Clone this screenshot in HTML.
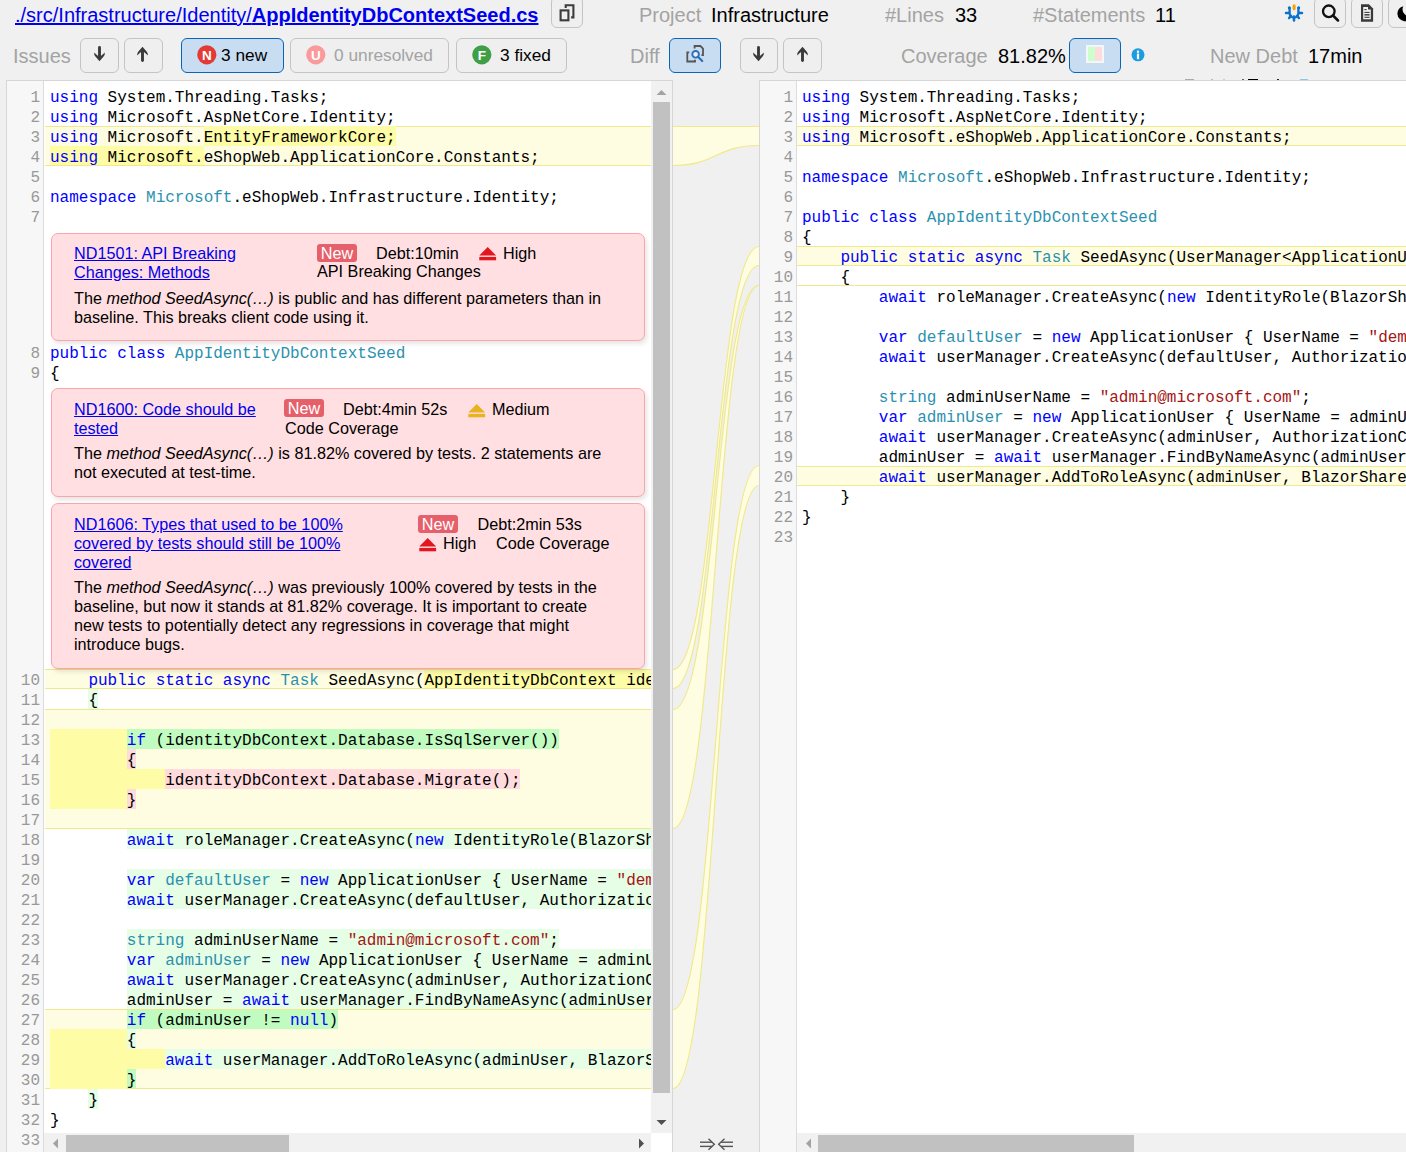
<!DOCTYPE html>
<html><head><meta charset="utf-8">
<style>
*{box-sizing:border-box;margin:0;padding:0}
html,body{width:1406px;height:1152px;overflow:hidden;background:#f0f0f0;font-family:"Liberation Sans",sans-serif;}
body{position:relative}
.a{position:absolute;white-space:nowrap}
.hd{font-size:20px;line-height:24px}
.bt{font-size:17.3px;line-height:22px}
.lbl{color:#a3a3a3}
.val{color:#000}
.btn{position:absolute;border:1px solid #c4c4c4;border-radius:6px;background:#efefef}
.btn.on{background:#c8dcf2;border:1.5px solid #0a64b8}
.pane{position:absolute;top:80px;height:1090px;background:#fff;border:1px solid #d6d6d6;overflow:hidden}
.gut{position:absolute;left:0;top:0;width:37px;height:100%;background:#f7f7f7;border-right:1px solid #dcdcdc}
.code{position:absolute;overflow:hidden}
.r{position:absolute}
.ln{position:absolute;left:6px;height:20px;padding-top:2px;line-height:20px;font-family:"Liberation Mono",monospace;font-size:16px;white-space:pre;color:#000}
.nm{position:absolute;right:3px;height:20px;padding-top:2px;line-height:20px;font-family:"Liberation Mono",monospace;font-size:16px;color:#999;text-align:right}
i{font-style:normal}
i.k{color:#0000ff}
i.t{color:#2b91af}
i.s{color:#a31515}
.box{position:absolute;left:51px;width:594px;background:#ffdfe1;border:1px solid #fca5a8;border-radius:7px;box-shadow:2px 3px 4px rgba(0,0,0,0.10)}
.bx{position:absolute;white-space:nowrap;font-size:16.2px;line-height:19px;color:#000}
.bx a{color:#0000ee;text-decoration:underline}
.bx em{font-style:italic}
.badge{position:absolute;height:18px;width:40px;background:#e6606c;color:#fff;border-radius:3px;font-size:16.2px;line-height:19.5px;text-align:center}
.sb{position:absolute;background:#f1f1f1}
.th{position:absolute;background:#c1c1c1}
svg{position:absolute;overflow:visible}
</style></head><body>

<!-- header row 1 -->
<div class="a hd" style="left:15px;top:3px;"><a style="color:#0000ee;text-decoration:underline">./src/Infrastructure/Identity/<b>AppIdentityDbContextSeed.cs</b></a></div>
<div class="btn" style="left:551px;top:-4px;width:32px;height:32px"></div>
<svg style="left:559px;top:4px" width="18" height="18" viewBox="0 0 18 18"><path d="M6.7 3.9 V1.2 H14.4 V13.4 H12.1" fill="none" stroke="#3c3c3c" stroke-width="2.1"/><rect x="1.6" y="6.4" width="7.8" height="9.9" fill="none" stroke="#3c3c3c" stroke-width="2.1"/></svg>
<div class="a hd lbl" style="left:639px;top:3px">Project</div>
<div class="a hd val" style="left:711px;top:3px">Infrastructure</div>
<div class="a hd lbl" style="left:885px;top:3px">#Lines</div>
<div class="a hd val" style="left:955px;top:3px">33</div>
<div class="a hd lbl" style="left:1033px;top:3px">#Statements</div>
<div class="a hd val" style="left:1155px;top:3px">11</div>
<!-- gear -->
<svg style="left:1284px;top:3px" width="20" height="20" viewBox="0 0 20 20">
 <g fill="none" stroke="#0a72c8" stroke-linecap="round">
  <path d="M5.6 5 V10.2 A4.4 4.4 0 0 0 14.4 10.2 V5" stroke-width="2.3"/>
  <line x1="5" y1="9.9" x2="2" y2="9.9" stroke-width="2.5"/>
  <line x1="15" y1="9.9" x2="18" y2="9.9" stroke-width="2.5"/>
  <line x1="7" y1="12.8" x2="5.1" y2="15" stroke-width="2.5"/>
  <line x1="13" y1="12.8" x2="14.9" y2="15" stroke-width="2.5"/>
  <line x1="10" y1="13.5" x2="10" y2="17.6" stroke-width="2.5"/>
 </g>
 <circle cx="5.3" cy="4.8" r="1.5" fill="#0a72c8"/>
 <circle cx="14.7" cy="4.8" r="1.5" fill="#0a72c8"/>
 <rect x="8.6" y="1.3" width="3" height="6" rx="1.5" fill="#f9a000"/>
</svg>
<div class="btn" style="left:1314px;top:-3px;width:32px;height:31px"></div>
<svg style="left:1320px;top:3px" width="20" height="20" viewBox="0 0 20 20"><circle cx="8.8" cy="8.3" r="5.8" fill="none" stroke="#111" stroke-width="2.3"/><line x1="13" y1="12.5" x2="18" y2="17.5" stroke="#111" stroke-width="2.5" stroke-linecap="round"/></svg>
<div class="btn" style="left:1351px;top:-3px;width:32px;height:31px"></div>
<svg style="left:1360px;top:4px" width="14" height="18" viewBox="0 0 14 18"><path d="M1 0.3 H8.9 L13.1 4.5 V17.8 H1 Z" fill="#3a3a3a"/><path d="M3.2 2.9 H8 V5.6 H10.8 V15.2 H3.2 Z" fill="#f2f2f2"/><g stroke="#3a3a3a" stroke-width="1.1"><line x1="4.4" y1="5.6" x2="6.6" y2="5.6"/><line x1="4.4" y1="8.4" x2="9.6" y2="8.4"/><line x1="4.4" y1="10.8" x2="9.6" y2="10.8" stroke-width="1.5"/><line x1="4.4" y1="13.3" x2="9.6" y2="13.3"/></g></svg>
<div class="btn" style="left:1388px;top:-3px;width:32px;height:31px"></div>
<svg style="left:1394px;top:3px" width="22" height="22" viewBox="0 0 22 22"><path d="M9.275 3.198 A7.6 7.6 0 1 0 18.319 12.652 A7 7 0 0 1 9.275 3.198 Z" fill="#000"/></svg>

<!-- header row 2 -->
<div class="a hd lbl" style="left:13px;top:44px">Issues</div>
<div class="btn" style="left:80px;top:38px;width:39px;height:35px"></div>
<svg style="left:93px;top:46px" width="13" height="16" viewBox="0 0 13 16"><line x1="6.5" y1="1.4" x2="6.5" y2="12" stroke="#3a3a3a" stroke-width="2.9" stroke-linecap="round"/><path d="M1.2 6.6 Q1 9.2 2.2 10.2 L6.5 15.2 L10.8 10.2 Q12 9.2 11.8 6.6 Q9.5 9 6.5 11 Q3.5 9 1.2 6.6 Z" fill="#3a3a3a"/></svg>
<div class="btn" style="left:124px;top:38px;width:39px;height:35px"></div>
<svg style="left:136px;top:46px" width="13" height="16" viewBox="0 0 13 16"><line x1="6.5" y1="4" x2="6.5" y2="14.6" stroke="#3a3a3a" stroke-width="2.9" stroke-linecap="round"/><path d="M1.2 9.4 Q1 6.8 2.2 5.8 L6.5 0.8 L10.8 5.8 Q12 6.8 11.8 9.4 Q9.5 7 6.5 5 Q3.5 7 1.2 9.4 Z" fill="#3a3a3a"/></svg>
<div class="btn on" style="left:181px;top:38px;width:103px;height:35px"></div>
<svg style="left:197px;top:45px" width="20" height="20" viewBox="0 0 20 20"><circle cx="9.8" cy="9.8" r="9.6" fill="#e33a36"/><text x="9.8" y="14.6" text-anchor="middle" font-family="Liberation Sans" font-weight="bold" font-size="13.5" fill="#fff">N</text></svg>
<div class="a bt val" style="left:221px;top:44px">3 new</div>
<div class="btn" style="left:290px;top:38px;width:159px;height:35px"></div>
<svg style="left:306px;top:45px" width="20" height="20" viewBox="0 0 20 20"><circle cx="9.8" cy="9.8" r="9.6" fill="#fa9a9a"/><text x="9.8" y="14.6" text-anchor="middle" font-family="Liberation Sans" font-weight="bold" font-size="13.5" fill="#fff">U</text></svg>
<div class="a bt lbl" style="left:334px;top:44px">0 unresolved</div>
<div class="btn" style="left:456px;top:38px;width:111px;height:35px"></div>
<svg style="left:472px;top:45px" width="20" height="20" viewBox="0 0 20 20"><circle cx="9.8" cy="9.8" r="9.6" fill="#3f9f47"/><text x="9.8" y="14.6" text-anchor="middle" font-family="Liberation Sans" font-weight="bold" font-size="13.5" fill="#fff">F</text></svg>
<div class="a bt val" style="left:500px;top:44px">3 fixed</div>
<div class="a hd lbl" style="left:630px;top:44px">Diff</div>
<div class="btn on" style="left:669px;top:38px;width:52px;height:35px"></div>
<svg style="left:685px;top:44px" width="20" height="20" viewBox="0 0 20 20">
 <path d="M9.6 4.4 V2 H15.4 L18 4.6 V11.2 H16.4" fill="none" stroke="#555" stroke-width="1.8"/>
 <path d="M4.2 8.3 H2.3 V17.5 H10 V15.8" fill="none" stroke="#555" stroke-width="1.8"/>
 <circle cx="10.6" cy="10.3" r="3.3" fill="#eef" stroke="#2f6fb5" stroke-width="1.9"/>
 <line x1="13" y1="12.8" x2="17.2" y2="17" stroke="#2f6fb5" stroke-width="2.2" stroke-linecap="round"/>
</svg>
<div class="btn" style="left:740px;top:38px;width:38px;height:35px"></div>
<svg style="left:752px;top:46px" width="13" height="16" viewBox="0 0 13 16"><line x1="6.5" y1="1.4" x2="6.5" y2="12" stroke="#3a3a3a" stroke-width="2.9" stroke-linecap="round"/><path d="M1.2 6.6 Q1 9.2 2.2 10.2 L6.5 15.2 L10.8 10.2 Q12 9.2 11.8 6.6 Q9.5 9 6.5 11 Q3.5 9 1.2 6.6 Z" fill="#3a3a3a"/></svg>
<div class="btn" style="left:783px;top:38px;width:39px;height:35px"></div>
<svg style="left:796px;top:46px" width="13" height="16" viewBox="0 0 13 16"><line x1="6.5" y1="4" x2="6.5" y2="14.6" stroke="#3a3a3a" stroke-width="2.9" stroke-linecap="round"/><path d="M1.2 9.4 Q1 6.8 2.2 5.8 L6.5 0.8 L10.8 5.8 Q12 6.8 11.8 9.4 Q9.5 7 6.5 5 Q3.5 7 1.2 9.4 Z" fill="#3a3a3a"/></svg>
<div class="a hd lbl" style="left:901px;top:44px">Coverage</div>
<div class="a hd val" style="left:998px;top:44px">81.82%</div>
<div class="btn on" style="left:1069px;top:38px;width:52px;height:35px"></div>
<div class="r" style="left:1086px;top:45px;width:17.5px;height:17.5px;background:#f3f7fb"></div>
<div class="r" style="left:1087.5px;top:46.5px;width:7.4px;height:14.5px;background:#ccffcc"></div>
<div class="r" style="left:1094.9px;top:46.5px;width:7.4px;height:14.5px;background:#ffdcdc"></div>
<svg style="left:1131px;top:48px" width="14" height="14" viewBox="0 0 14 14"><circle cx="7" cy="6.8" r="6.5" fill="#1b9be0"/><rect x="5.9" y="2.6" width="2.2" height="2.2" fill="#fff"/><rect x="5.9" y="5.6" width="2.2" height="5.6" fill="#fff"/></svg>
<div class="a hd lbl" style="left:1210px;top:44px">New Debt</div>
<div class="a hd val" style="left:1308px;top:44px">17min</div>

<!-- row3 fragments -->
<div class="r" style="left:1185px;top:79px;width:9px;height:1px;background:#aaa"></div>
<div class="r" style="left:1211px;top:79px;width:2px;height:1px;background:#c8b8a8"></div>
<div class="r" style="left:1223px;top:79px;width:2px;height:1px;background:#ccc"></div>
<div class="r" style="left:1242px;top:79px;width:2px;height:1px;background:#664"></div>
<div class="r" style="left:1248px;top:79px;width:10px;height:1px;background:#000"></div>
<div class="r" style="left:1277px;top:79px;width:2px;height:1px;background:#224"></div>
<div class="r" style="left:1300px;top:79px;width:8px;height:1px;background:#8ec6ec"></div>
<!-- left pane -->
<div class="pane" style="left:6px;width:667px">
  <div class="gut"></div>
</div>
<div class="a" style="left:7px;top:0;width:36px;height:1152px"><div class="nm" style="top:86px">1</div>
<div class="nm" style="top:106px">2</div>
<div class="nm" style="top:126px">3</div>
<div class="nm" style="top:146px">4</div>
<div class="nm" style="top:166px">5</div>
<div class="nm" style="top:186px">6</div>
<div class="nm" style="top:206px">7</div>
<div class="nm" style="top:342px">8</div>
<div class="nm" style="top:362px">9</div>
<div class="nm" style="top:669px">10</div>
<div class="nm" style="top:689px">11</div>
<div class="nm" style="top:709px">12</div>
<div class="nm" style="top:729px">13</div>
<div class="nm" style="top:749px">14</div>
<div class="nm" style="top:769px">15</div>
<div class="nm" style="top:789px">16</div>
<div class="nm" style="top:809px">17</div>
<div class="nm" style="top:829px">18</div>
<div class="nm" style="top:849px">19</div>
<div class="nm" style="top:869px">20</div>
<div class="nm" style="top:889px">21</div>
<div class="nm" style="top:909px">22</div>
<div class="nm" style="top:929px">23</div>
<div class="nm" style="top:949px">24</div>
<div class="nm" style="top:969px">25</div>
<div class="nm" style="top:989px">26</div>
<div class="nm" style="top:1009px">27</div>
<div class="nm" style="top:1029px">28</div>
<div class="nm" style="top:1049px">29</div>
<div class="nm" style="top:1069px">30</div>
<div class="nm" style="top:1089px">31</div>
<div class="nm" style="top:1109px">32</div>
<div class="nm" style="top:1129px">33</div></div>
<div class="code" style="left:44px;width:607px;height:1133px;top:0">
<div class="r" style="left:1.0px;top:126px;width:607.0px;height:40px;background:#fffde1"></div>
<div class="r" style="left:1.0px;top:126px;width:607.0px;height:1px;background:#efe98c"></div>
<div class="r" style="left:1.0px;top:165px;width:607.0px;height:1px;background:#efe98c"></div>
<div class="r" style="left:159.6px;top:126px;width:192.0px;height:20px;background:#fffca6"></div>
<div class="r" style="left:6.0px;top:146px;width:153.6px;height:19px;background:#fffca6"></div>
<div class="r" style="left:1.0px;top:669px;width:607.0px;height:20px;background:#fffde1"></div>
<div class="r" style="left:1.0px;top:669px;width:607.0px;height:1px;background:#efe98c"></div>
<div class="r" style="left:1.0px;top:688px;width:607.0px;height:1px;background:#efe98c"></div>
<div class="r" style="left:380.4px;top:670px;width:288.0px;height:18px;background:#fffca6"></div>
<div class="r" style="left:44.4px;top:689px;width:9.6px;height:20px;background:#e6fde6"></div>
<div class="r" style="left:1.0px;top:709px;width:607.0px;height:120px;background:#fffde1"></div>
<div class="r" style="left:1.0px;top:709px;width:607.0px;height:1px;background:#efe98c"></div>
<div class="r" style="left:1.0px;top:828px;width:607.0px;height:1px;background:#efe98c"></div>
<div class="r" style="left:6.0px;top:729px;width:76.8px;height:20px;background:#fffca6"></div>
<div class="r" style="left:6.0px;top:749px;width:76.8px;height:20px;background:#fffca6"></div>
<div class="r" style="left:6.0px;top:789px;width:76.8px;height:20px;background:#fffca6"></div>
<div class="r" style="left:6.0px;top:769px;width:115.2px;height:20px;background:#fffca6"></div>
<div class="r" style="left:82.8px;top:729px;width:432.0px;height:20px;background:#c0fbc0"></div>
<div class="r" style="left:82.8px;top:749px;width:9.6px;height:20px;background:#ffdbdd"></div>
<div class="r" style="left:121.2px;top:769px;width:355.2px;height:20px;background:#ffdbdd"></div>
<div class="r" style="left:82.8px;top:789px;width:9.6px;height:20px;background:#ffdbdd"></div>
<div class="r" style="left:82.8px;top:829px;width:672.0px;height:20px;background:#e6fde6"></div>
<div class="r" style="left:82.8px;top:869px;width:672.0px;height:20px;background:#e6fde6"></div>
<div class="r" style="left:82.8px;top:889px;width:672.0px;height:20px;background:#e6fde6"></div>
<div class="r" style="left:82.8px;top:949px;width:672.0px;height:20px;background:#e6fde6"></div>
<div class="r" style="left:82.8px;top:969px;width:672.0px;height:20px;background:#e6fde6"></div>
<div class="r" style="left:82.8px;top:989px;width:672.0px;height:20px;background:#e6fde6"></div>
<div class="r" style="left:82.8px;top:929px;width:432.0px;height:20px;background:#e6fde6"></div>
<div class="r" style="left:1.0px;top:1009px;width:607.0px;height:80px;background:#fffde1"></div>
<div class="r" style="left:1.0px;top:1009px;width:607.0px;height:1px;background:#efe98c"></div>
<div class="r" style="left:1.0px;top:1088px;width:607.0px;height:1px;background:#efe98c"></div>
<div class="r" style="left:82.8px;top:1010px;width:211.2px;height:19px;background:#c0fbc0"></div>
<div class="r" style="left:6.0px;top:1029px;width:76.8px;height:20px;background:#fffca6"></div>
<div class="r" style="left:6.0px;top:1069px;width:76.8px;height:20px;background:#fffca6"></div>
<div class="r" style="left:6.0px;top:1049px;width:115.2px;height:20px;background:#fffca6"></div>
<div class="r" style="left:82.8px;top:1029px;width:9.6px;height:20px;background:#e6fde6"></div>
<div class="r" style="left:121.2px;top:1049px;width:672.0px;height:20px;background:#e6fde6"></div>
<div class="r" style="left:82.8px;top:1069px;width:9.6px;height:19px;background:#c0fbc0"></div>
<div class="r" style="left:44.4px;top:1089px;width:9.6px;height:20px;background:#e6fde6"></div>
<div class="ln" style="top:86px;left:6px"><i class="k">using</i> System.Threading.Tasks;</div>
<div class="ln" style="top:106px;left:6px"><i class="k">using</i> Microsoft.AspNetCore.Identity;</div>
<div class="ln" style="top:126px;left:6px"><i class="k">using</i> Microsoft.EntityFrameworkCore;</div>
<div class="ln" style="top:146px;left:6px"><i class="k">using</i> Microsoft.eShopWeb.ApplicationCore.Constants;</div>
<div class="ln" style="top:186px;left:6px"><i class="k">namespace</i> <i class="t">Microsoft</i>.eShopWeb.Infrastructure.Identity;</div>
<div class="ln" style="top:342px;left:6px"><i class="k">public</i> <i class="k">class</i> <i class="t">AppIdentityDbContextSeed</i></div>
<div class="ln" style="top:362px;left:6px">{</div>
<div class="ln" style="top:669px;left:6px">    <i class="k">public</i> <i class="k">static</i> <i class="k">async</i> <i class="t">Task</i> SeedAsync(AppIdentityDbContext identityDbContext, UserManager&lt;ApplicationUser&gt; userManager, RoleManager&lt;IdentityRole&gt; roleManager)</div>
<div class="ln" style="top:689px;left:6px">    {</div>
<div class="ln" style="top:729px;left:6px">        <i class="k">if</i> (identityDbContext.Database.IsSqlServer())</div>
<div class="ln" style="top:749px;left:6px">        {</div>
<div class="ln" style="top:769px;left:6px">            identityDbContext.Database.Migrate();</div>
<div class="ln" style="top:789px;left:6px">        }</div>
<div class="ln" style="top:829px;left:6px">        <i class="k">await</i> roleManager.CreateAsync(<i class="k">new</i> IdentityRole(BlazorShared.Authorization.Constants.Roles.ADMINISTRATORS));</div>
<div class="ln" style="top:869px;left:6px">        <i class="k">var</i> <i class="t">defaultUser</i> = <i class="k">new</i> ApplicationUser { UserName = <i class="s">&quot;demouser@microsoft.com&quot;</i>, Email = <i class="s">&quot;demouser@microsoft.com&quot;</i> };</div>
<div class="ln" style="top:889px;left:6px">        <i class="k">await</i> userManager.CreateAsync(defaultUser, AuthorizationConstants.DEFAULT_PASSWORD);</div>
<div class="ln" style="top:929px;left:6px">        <i class="t">string</i> adminUserName = <i class="s">&quot;admin@microsoft.com&quot;</i>;</div>
<div class="ln" style="top:949px;left:6px">        <i class="k">var</i> <i class="t">adminUser</i> = <i class="k">new</i> ApplicationUser { UserName = adminUserName, Email = adminUserName };</div>
<div class="ln" style="top:969px;left:6px">        <i class="k">await</i> userManager.CreateAsync(adminUser, AuthorizationConstants.DEFAULT_PASSWORD);</div>
<div class="ln" style="top:989px;left:6px">        adminUser = <i class="k">await</i> userManager.FindByNameAsync(adminUserName);</div>
<div class="ln" style="top:1009px;left:6px">        <i class="k">if</i> (adminUser != <i class="k">null</i>)</div>
<div class="ln" style="top:1029px;left:6px">        {</div>
<div class="ln" style="top:1049px;left:6px">            <i class="k">await</i> userManager.AddToRoleAsync(adminUser, BlazorShared.Authorization.Constants.Roles.ADMINISTRATORS);</div>
<div class="ln" style="top:1069px;left:6px">        }</div>
<div class="ln" style="top:1089px;left:6px">    }</div>
<div class="ln" style="top:1109px;left:6px">}</div>

</div>
<!-- left v scrollbar -->
<div class="sb" style="left:651px;top:81px;width:21px;height:1052px"></div>
<div class="th" style="left:653px;top:102px;width:17px;height:991px"></div>
<svg style="left:656px;top:89px" width="11" height="7" viewBox="0 0 11 7"><path d="M0.5 6 L5.5 1 L10.5 6 Z" fill="#a3a3a3"/></svg>
<svg style="left:656px;top:1119px" width="11" height="7" viewBox="0 0 11 7"><path d="M0.5 1 L5.5 6 L10.5 1 Z" fill="#505050"/></svg>
<!-- left h scrollbar -->
<div class="sb" style="left:44px;top:1133px;width:607px;height:21px"></div>
<div class="th" style="left:66px;top:1135px;width:223px;height:17px"></div>
<svg style="left:52px;top:1138px" width="7" height="11" viewBox="0 0 7 11"><path d="M6 0.5 L1 5.5 L6 10.5 Z" fill="#a3a3a3"/></svg>
<svg style="left:638px;top:1138px" width="7" height="11" viewBox="0 0 7 11"><path d="M1 0.5 L6 5.5 L1 10.5 Z" fill="#505050"/></svg>
<div class="r" style="left:652px;top:1134px;width:20px;height:20px;background:#fff"></div>

<!-- middle curves -->
<svg style="left:0;top:0" width="1406" height="1152" viewBox="0 0 1406 1152"><path d="M673 126.5 C716.0 126.5 716.0 126.5 759 126.5 L759 145.5 C716.0 145.5 716.0 165.5 673 165.5 Z" fill="#fffde1"/><path d="M673 126.5 C716.0 126.5 716.0 126.5 759 126.5" fill="none" stroke="#efe98c" stroke-width="1.2"/><path d="M673 165.5 C716.0 165.5 716.0 145.5 759 145.5" fill="none" stroke="#efe98c" stroke-width="1.2"/><path d="M673 669.5 C716.0 669.5 716.0 246.5 759 246.5 L759 265.5 C716.0 265.5 716.0 688.5 673 688.5 Z" fill="#fffde1"/><path d="M673 669.5 C716.0 669.5 716.0 246.5 759 246.5" fill="none" stroke="#efe98c" stroke-width="1.2"/><path d="M673 688.5 C716.0 688.5 716.0 265.5 759 265.5" fill="none" stroke="#efe98c" stroke-width="1.2"/><path d="M673 709.5 C716.0 709.5 716.0 285.5 759 285.5 L759 285.5 C716.0 285.5 716.0 828.5 673 828.5 Z" fill="#fffde1"/><path d="M673 709.5 C716.0 709.5 716.0 285.5 759 285.5" fill="none" stroke="#efe98c" stroke-width="1.2"/><path d="M673 828.5 C716.0 828.5 716.0 285.5 759 285.5" fill="none" stroke="#efe98c" stroke-width="1.2"/><path d="M673 1009.5 C716.0 1009.5 716.0 465.5 759 465.5 L759 485.5 C716.0 485.5 716.0 1088.5 673 1088.5 Z" fill="#fffde1"/><path d="M673 1009.5 C716.0 1009.5 716.0 465.5 759 465.5" fill="none" stroke="#efe98c" stroke-width="1.2"/><path d="M673 1088.5 C716.0 1088.5 716.0 485.5 759 485.5" fill="none" stroke="#efe98c" stroke-width="1.2"/></svg>
<div class="box" style="top:233px;height:108px"></div>
<div class="bx" style="left:74.0px;top:244.0px"><a>ND1501: API Breaking</a></div>
<div class="bx" style="left:74.0px;top:263.0px"><a>Changes: Methods</a></div>
<div class="badge" style="left:317.0px;top:244.0px">New</div>
<div class="bx" style="left:376.0px;top:244.0px">Debt:10min</div>
<svg style="left:479.0px;top:247.0px" width="18" height="14" viewBox="0 0 18 14"><path d="M0.3 8.4 L8.7 0 L17.1 8.4 Z" fill="#e2161e"/><rect x="0.3" y="9.9" width="16.8" height="3.4" fill="#e2161e"/></svg>
<div class="bx" style="left:503.0px;top:244.0px">High</div>
<div class="bx" style="left:317.0px;top:262.0px">API Breaking Changes</div>
<div class="bx" style="left:74.0px;top:289.0px">The <em>method SeedAsync(…)</em> is public and has different parameters than in</div>
<div class="bx" style="left:74.0px;top:308.0px">baseline. This breaks client code using it.</div>
<div class="box" style="top:388px;height:109px"></div>
<div class="bx" style="left:74.0px;top:400.0px"><a>ND1600: Code should be</a></div>
<div class="bx" style="left:74.0px;top:419.0px"><a>tested</a></div>
<div class="badge" style="left:284.0px;top:399.0px">New</div>
<div class="bx" style="left:343.0px;top:400.0px">Debt:4min 52s</div>
<svg style="left:467.5px;top:403.5px" width="18" height="14" viewBox="0 0 18 14"><path d="M0.3 8.4 L8.7 0 L17.1 8.4 Z" fill="#e9b21f"/><rect x="0.3" y="9.9" width="16.8" height="3.4" fill="#e9b21f"/></svg>
<div class="bx" style="left:492.0px;top:400.0px">Medium</div>
<div class="bx" style="left:285.0px;top:418.5px">Code Coverage</div>
<div class="bx" style="left:74.0px;top:444.0px">The <em>method SeedAsync(…)</em> is 81.82% covered by tests. 2 statements are</div>
<div class="bx" style="left:74.0px;top:463.0px">not executed at test-time.</div>
<div class="box" style="top:503px;height:166px"></div>
<div class="bx" style="left:74.0px;top:515.0px"><a>ND1606: Types that used to be 100%</a></div>
<div class="bx" style="left:74.0px;top:534.0px"><a>covered by tests should still be 100%</a></div>
<div class="bx" style="left:74.0px;top:553.0px"><a>covered</a></div>
<div class="badge" style="left:418.0px;top:515.0px">New</div>
<div class="bx" style="left:477.5px;top:514.5px">Debt:2min 53s</div>
<svg style="left:419.0px;top:537.5px" width="18" height="14" viewBox="0 0 18 14"><path d="M0.3 8.4 L8.7 0 L17.1 8.4 Z" fill="#e2161e"/><rect x="0.3" y="9.9" width="16.8" height="3.4" fill="#e2161e"/></svg>
<div class="bx" style="left:443.0px;top:533.5px">High</div>
<div class="bx" style="left:496.0px;top:533.5px">Code Coverage</div>
<div class="bx" style="left:74.0px;top:578.0px">The <em>method SeedAsync(…)</em> was previously 100% covered by tests in the</div>
<div class="bx" style="left:74.0px;top:597.0px">baseline, but now it stands at 81.82% coverage. It is important to create</div>
<div class="bx" style="left:74.0px;top:616.0px">new tests to potentially detect any regressions in coverage that might</div>
<div class="bx" style="left:74.0px;top:635.0px">introduce bugs.</div>

<!-- right pane -->
<div class="pane" style="left:759px;width:660px">
  <div class="gut"></div>
</div>
<div class="a" style="left:760px;top:0;width:36px;height:1152px"><div class="nm" style="top:86px">1</div>
<div class="nm" style="top:106px">2</div>
<div class="nm" style="top:126px">3</div>
<div class="nm" style="top:146px">4</div>
<div class="nm" style="top:166px">5</div>
<div class="nm" style="top:186px">6</div>
<div class="nm" style="top:206px">7</div>
<div class="nm" style="top:226px">8</div>
<div class="nm" style="top:246px">9</div>
<div class="nm" style="top:266px">10</div>
<div class="nm" style="top:286px">11</div>
<div class="nm" style="top:306px">12</div>
<div class="nm" style="top:326px">13</div>
<div class="nm" style="top:346px">14</div>
<div class="nm" style="top:366px">15</div>
<div class="nm" style="top:386px">16</div>
<div class="nm" style="top:406px">17</div>
<div class="nm" style="top:426px">18</div>
<div class="nm" style="top:446px">19</div>
<div class="nm" style="top:466px">20</div>
<div class="nm" style="top:486px">21</div>
<div class="nm" style="top:506px">22</div>
<div class="nm" style="top:526px">23</div></div>
<div class="code" style="left:797px;width:609px;height:1133px;top:0">
<div class="r" style="left:0.0px;top:126px;width:620.0px;height:20px;background:#fffde1"></div>
<div class="r" style="left:0.0px;top:126px;width:620.0px;height:1px;background:#efe98c"></div>
<div class="r" style="left:0.0px;top:145px;width:620.0px;height:1px;background:#efe98c"></div>
<div class="r" style="left:0.0px;top:246px;width:620.0px;height:20px;background:#fffde1"></div>
<div class="r" style="left:0.0px;top:246px;width:620.0px;height:1px;background:#efe98c"></div>
<div class="r" style="left:0.0px;top:265px;width:620.0px;height:1px;background:#efe98c"></div>
<div class="r" style="left:0.0px;top:285px;width:620.0px;height:1px;background:#efe98c"></div>
<div class="r" style="left:0.0px;top:466px;width:620.0px;height:20px;background:#fffde1"></div>
<div class="r" style="left:0.0px;top:466px;width:620.0px;height:1px;background:#efe98c"></div>
<div class="r" style="left:0.0px;top:485px;width:620.0px;height:1px;background:#efe98c"></div>
<div class="ln" style="top:86px;left:5px"><i class="k">using</i> System.Threading.Tasks;</div>
<div class="ln" style="top:106px;left:5px"><i class="k">using</i> Microsoft.AspNetCore.Identity;</div>
<div class="ln" style="top:126px;left:5px"><i class="k">using</i> Microsoft.eShopWeb.ApplicationCore.Constants;</div>
<div class="ln" style="top:166px;left:5px"><i class="k">namespace</i> <i class="t">Microsoft</i>.eShopWeb.Infrastructure.Identity;</div>
<div class="ln" style="top:206px;left:5px"><i class="k">public</i> <i class="k">class</i> <i class="t">AppIdentityDbContextSeed</i></div>
<div class="ln" style="top:226px;left:5px">{</div>
<div class="ln" style="top:246px;left:5px">    <i class="k">public</i> <i class="k">static</i> <i class="k">async</i> <i class="t">Task</i> SeedAsync(UserManager&lt;ApplicationUser&gt; userManager, RoleManager&lt;IdentityRole&gt; roleManager)</div>
<div class="ln" style="top:266px;left:5px">    {</div>
<div class="ln" style="top:286px;left:5px">        <i class="k">await</i> roleManager.CreateAsync(<i class="k">new</i> IdentityRole(BlazorShared.Authorization.Constants.Roles.ADMINISTRATORS));</div>
<div class="ln" style="top:326px;left:5px">        <i class="k">var</i> <i class="t">defaultUser</i> = <i class="k">new</i> ApplicationUser { UserName = <i class="s">&quot;demouser@microsoft.com&quot;</i>, Email = <i class="s">&quot;demouser@microsoft.com&quot;</i> };</div>
<div class="ln" style="top:346px;left:5px">        <i class="k">await</i> userManager.CreateAsync(defaultUser, AuthorizationConstants.DEFAULT_PASSWORD);</div>
<div class="ln" style="top:386px;left:5px">        <i class="t">string</i> adminUserName = <i class="s">&quot;admin@microsoft.com&quot;</i>;</div>
<div class="ln" style="top:406px;left:5px">        <i class="k">var</i> <i class="t">adminUser</i> = <i class="k">new</i> ApplicationUser { UserName = adminUserName, Email = adminUserName };</div>
<div class="ln" style="top:426px;left:5px">        <i class="k">await</i> userManager.CreateAsync(adminUser, AuthorizationConstants.DEFAULT_PASSWORD);</div>
<div class="ln" style="top:446px;left:5px">        adminUser = <i class="k">await</i> userManager.FindByNameAsync(adminUserName);</div>
<div class="ln" style="top:466px;left:5px">        <i class="k">await</i> userManager.AddToRoleAsync(adminUser, BlazorShared.Authorization.Constants.Roles.ADMINISTRATORS);</div>
<div class="ln" style="top:486px;left:5px">    }</div>
<div class="ln" style="top:506px;left:5px">}</div>
</div>
<div class="sb" style="left:797px;top:1133px;width:620px;height:21px"></div>
<div class="th" style="left:818px;top:1135px;width:316px;height:17px"></div>
<svg style="left:805px;top:1138px" width="7" height="11" viewBox="0 0 7 11"><path d="M6 0.5 L1 5.5 L6 10.5 Z" fill="#a3a3a3"/></svg>

<!-- merge arrows -->
<svg style="left:700px;top:1138px" width="33" height="13" viewBox="0 0 33 13">
 <g fill="none" stroke="#555" stroke-width="1.4"><line x1="0" y1="4.2" x2="12" y2="4.2"/><line x1="0" y1="8.4" x2="12" y2="8.4"/><path d="M8.5 0.8 L14.3 6.3 L8.5 11.8"/><line x1="21" y1="4.2" x2="33" y2="4.2"/><line x1="21" y1="8.4" x2="33" y2="8.4"/><path d="M24.5 0.8 L18.7 6.3 L24.5 11.8"/></g>
</svg>

</body></html>
